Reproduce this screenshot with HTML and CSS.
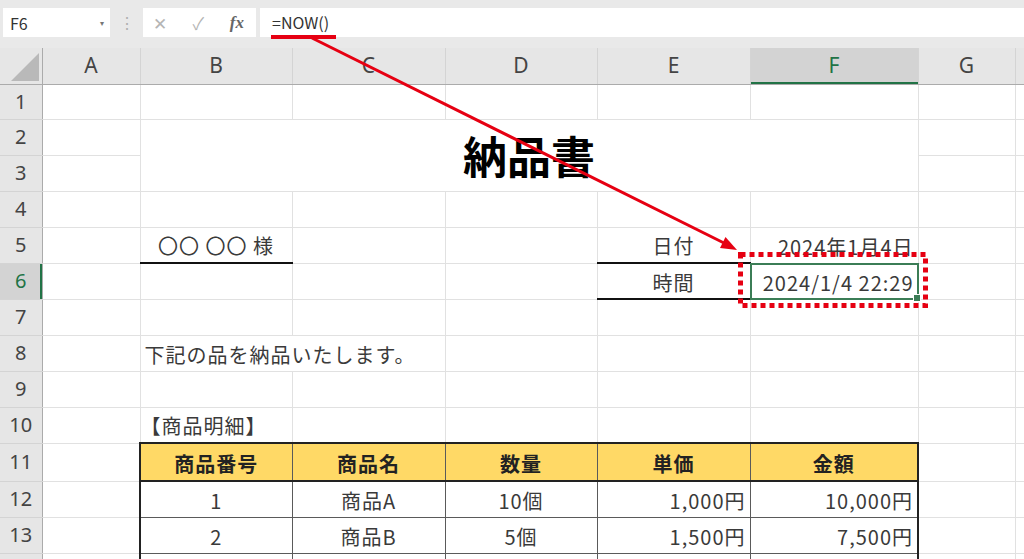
FILE: index.html
```html
<!DOCTYPE html>
<html lang="ja">
<head>
    <meta charset="UTF-8">
    <meta name="viewport" content="width=device-width, initial-scale=1.0">
    <title>納品書 - Excel</title>
    <link rel="stylesheet" href="styles.css">
</head>
<body>
    <div class="toolbar">
        <div class="namebox">
            <span>F6</span>
            <span class="drop">&#9662;</span>
        </div>
        <div class="grip">&#8942;</div>
        <div class="fxbox">
            <span class="ico">&#10005;</span>
            <span class="ico">&#10003;</span>
            <span class="fx">fx</span>
        </div>
        <div class="formula">=NOW()</div>
    </div>

    <table class="sheet">
        <colgroup>
            <col class="c-row">
            <col class="c-a">
            <col class="c-b">
            <col class="c-c">
            <col class="c-d">
            <col class="c-e">
            <col class="c-f">
            <col class="c-g">
            <col class="c-h">
        </colgroup>
        <tr class="head">
            <th class="corner"><span class="tri"></span></th>
            <th>A</th><th>B</th><th>C</th><th>D</th><th>E</th><th class="cur">F</th><th>G</th><th></th>
        </tr>
        <tr class="r1">
            <th>1</th><td></td><td></td><td></td><td></td><td></td><td></td><td></td><td></td>
        </tr>
        <tr>
            <th>2</th><td></td>
            <td class="title" colspan="5" rowspan="2">納品書</td>
            <td></td><td></td>
        </tr>
        <tr>
            <th>3</th><td></td><td></td><td></td>
        </tr>
        <tr>
            <th>4</th><td></td><td></td><td></td><td></td><td></td><td></td><td></td><td></td>
        </tr>
        <tr>
            <th>5</th><td></td>
            <td class="center line">〇〇 〇〇 様</td>
            <td></td><td></td>
            <td class="center line">日付</td>
            <td class="right">2024年1月4日</td>
            <td></td><td></td>
        </tr>
        <tr>
            <th class="cur">6</th><td></td><td></td><td></td><td></td>
            <td class="center line">時間</td>
            <td class="right sel">2024/1/4 22:29</td>
            <td></td><td></td>
        </tr>
        <tr>
            <th>7</th><td></td><td></td><td></td><td></td><td></td><td></td><td></td><td></td>
        </tr>
        <tr>
            <th>8</th><td></td>
            <td colspan="2">下記の品を納品いたします。</td>
            <td></td><td></td><td></td><td></td><td></td>
        </tr>
        <tr>
            <th>9</th><td></td><td></td><td></td><td></td><td></td><td></td><td></td><td></td>
        </tr>
        <tr>
            <th>10</th><td></td><td class="bracket">【商品明細】</td><td></td><td></td><td></td><td></td><td></td><td></td>
        </tr>
        <tr class="r11">
            <th>11</th><td></td>
            <td class="t th first">商品番号</td>
            <td class="t th">商品名</td>
            <td class="t th">数量</td>
            <td class="t th">単価</td>
            <td class="t th last">金額</td>
            <td></td><td></td>
        </tr>
        <tr>
            <th>12</th><td></td>
            <td class="t center first">1</td>
            <td class="t center">商品A</td>
            <td class="t center">10個</td>
            <td class="t right">1,000円</td>
            <td class="t right last">10,000円</td>
            <td></td><td></td>
        </tr>
        <tr>
            <th>13</th><td></td>
            <td class="t center first">2</td>
            <td class="t center">商品B</td>
            <td class="t center">5個</td>
            <td class="t right">1,500円</td>
            <td class="t right last">7,500円</td>
            <td></td><td></td>
        </tr>
        <tr class="r14">
            <th></th><td></td>
            <td class="t first"></td>
            <td class="t"></td>
            <td class="t"></td>
            <td class="t"></td>
            <td class="t last"></td>
            <td></td><td></td>
        </tr>
    </table>

    <!-- red annotation drawn over the sheet -->
    <svg class="marks" width="1024" height="559" viewBox="0 0 1024 559">
        <line x1="271" y1="37" x2="336" y2="37" stroke="#e60012" stroke-width="4"/>
        <line x1="312" y1="38" x2="724" y2="243" stroke="#e60012" stroke-width="3"/>
        <polygon points="737,250 720,248 725.5,237" fill="#e60012"/>
        <rect x="740.5" y="254.5" width="185" height="51" fill="none" stroke="#e60012" stroke-width="5" stroke-dasharray="5 4"/>
    </svg>
</body>
</html>
```

FILE: styles.css
```css
body {
    margin: 0;
    width: 1024px;
    height: 559px;
    overflow: hidden;
    position: relative;
    background: #fff;
    font-family: "Noto Sans CJK JP", "Noto Sans", sans-serif;
    color: #3a3a3a;
}

.toolbar {
    height: 48px;
    background: #e9e9e9;
    display: flex;
    align-items: flex-start;
    padding-top: 8px;
    box-sizing: border-box;
}
.namebox {
    width: 107px;
    height: 29px;
    margin-left: 3px;
    background: #fff;
    display: flex;
    align-items: center;
    justify-content: space-between;
    padding: 0 6px 0 7px;
    box-sizing: border-box;
    font-size: 16px;
    color: #333;
}
.namebox .drop {
    font-size: 8px;
    color: #777;
}
.grip {
    width: 33px;
    text-align: center;
    font-size: 16px;
    line-height: 29px;
    color: #b0b0b0;
}
.fxbox {
    width: 113px;
    height: 29px;
    background: #fff;
    display: flex;
    align-items: center;
    justify-content: space-between;
    padding: 0 12px 0 10px;
    box-sizing: border-box;
}
.fxbox .ico {
    font-size: 17px;
    color: #b5b5b5;
}
.fxbox .fx {
    font-family: "Liberation Serif", serif;
    font-style: italic;
    font-weight: bold;
    font-size: 17px;
    color: #666;
}
.formula {
    flex: 1;
    height: 29px;
    margin-left: 4px;
    background: #fff;
    padding-left: 12px;
    font-size: 16px;
    line-height: 29px;
    color: #333;
}

.sheet {
    border-collapse: collapse;
    table-layout: fixed;
    width: 1024px;
    font-size: 20px;
    line-height: 1;
}
.c-row { width: 42px; }
.c-a { width: 98px; }
.c-b { width: 152px; }
.c-c { width: 153px; }
.c-d { width: 152px; }
.c-e { width: 153px; }
.c-f { width: 168px; }
.c-g { width: 97px; }
.c-h { width: 9px; }

.sheet tr { height: 36px; }
.sheet tr.r1 { height: 35px; }
.sheet tr.r11 { height: 38px; }
.sheet tr.r14 { height: 6px; }
.sheet tr.r14 td,
.sheet tr.r14 th { padding: 0; border-bottom: none; }

.sheet th {
    background: #e6e6e6;
    font-weight: normal;
    color: #444;
    border: 1px solid #d4d4d4;
    padding: 0;
    text-align: center;
    font-family: "Noto Sans", "Noto Sans CJK JP", sans-serif;
}
.sheet tr.head th {
    border-top: none;
    border-bottom: 1px solid #ababab;
    font-size: 21px;
}
.sheet tr th:first-child {
    border-left: none;
    border-right: 1px solid #ababab;
}
.sheet th.cur {
    background: #d3d3d3;
    color: #217346;
}
.sheet tr.head th.cur {
    box-shadow: inset 0 -2px #217346;
}
.sheet tr th.cur:first-child {
    box-shadow: inset -2px 0 #217346;
}
.corner {
    position: relative;
}
.corner .tri {
    position: absolute;
    right: 3px;
    bottom: 3px;
    width: 0;
    height: 0;
    border-left: 28px solid transparent;
    border-bottom: 28px solid #b9b9b9;
}

.sheet td {
    border: 1px solid #e1e1e1;
    padding: 3px 4px 0;
    white-space: nowrap;
    overflow: visible;
    letter-spacing: 1px;
}
.center { text-align: center; }
.right { text-align: right; }
.sheet td.line { border-bottom: 2px solid #111; }

.sheet td.title {
    text-align: center;
    font-size: 44px;
    font-weight: bold;
    color: #000;
    padding-top: 0;
    letter-spacing: 0;
}
.sheet td.bracket {
    padding-left: 0;
}

.sheet td.t {
    border: 1px solid #5a5a5a;
}
.sheet td.t.first { border-left: 2px solid #222; }
.sheet td.t.last { border-right: 2px solid #222; }
.sheet td.th {
    background: #ffd966;
    font-weight: bold;
    color: #222;
    text-align: center;
    border-top: 2px solid #222;
    border-bottom: 2px solid #222;
}

.sheet td.sel {
    position: relative;
}
.sheet td.sel::after {
    content: "";
    position: absolute;
    left: -1px;
    top: -1px;
    right: -1px;
    bottom: -1px;
    border: 2px solid #3b7d56;
}
.sheet td.sel::before {
    content: "";
    position: absolute;
    right: -3px;
    bottom: -3px;
    width: 6px;
    height: 6px;
    background: #3b7d56;
    border: 1px solid #fff;
    z-index: 1;
}

.marks {
    position: absolute;
    left: 0;
    top: 0;
    pointer-events: none;
}
```
